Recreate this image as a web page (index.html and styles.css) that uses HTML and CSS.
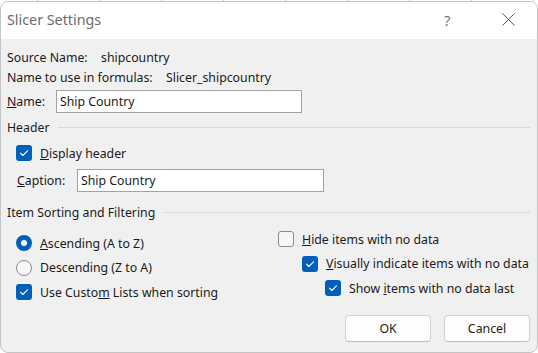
FILE: index.html
```html
<!DOCTYPE html>
<html>
<head>
<meta charset="utf-8">
<link rel="stylesheet" href="styles.css">
</head>
<body>
<div class="sheet"></div>
<div class="window">
  <div class="titlebar">
    <span class="title">Slicer Settings</span>
    <span class="help">?</span>
    <span class="close"><svg width="13" height="13" viewBox="0 0 13 13"><path d="M0.5 0.5 L12.5 12.5 M12.5 0.5 L0.5 12.5" stroke="#5a5a5a" stroke-width="1" fill="none"/></svg></span>
  </div>
  <div class="content">
    <div class="row info"><span class="lbl-src">Source Name:</span><span>shipcountry</span></div>
    <div class="row info"><span class="lbl-formula">Name to use in formulas:</span><span>Slicer_shipcountry</span></div>
    <div class="row field name-field"><label class="lbl-name"><u>N</u>ame:</label><div class="input name-input">Ship Country</div></div>
    <div class="group-title header-title"><span>Header</span><div class="rule"></div></div>
    <div class="row check indent1 display-row"><span class="cb checked"><svg width="16" height="16" viewBox="0 0 16 16"><path d="M4.5 8.2 L6.8 10.5 L11.5 5.8" stroke="#fff" stroke-width="1.1" fill="none" stroke-linecap="round" stroke-linejoin="round"/></svg></span><span><u>D</u>isplay header</span></div>
    <div class="row field caption-field"><label class="lbl-caption"><u>C</u>aption:</label><div class="input caption-input">Ship Country</div></div>
    <div class="group-title sort-title"><span>Item Sorting and Filtering</span><div class="rule"></div></div>
    <div class="columns">
      <div class="col left">
        <div class="row check"><span class="radio checked"></span><span><u>A</u>scending (A to Z)</span></div>
        <div class="row check"><span class="radio"></span><span>Descendin<u>g</u> (Z to A)</span></div>
        <div class="row check"><span class="cb checked"><svg width="16" height="16" viewBox="0 0 16 16"><path d="M4.5 8.2 L6.8 10.5 L11.5 5.8" stroke="#fff" stroke-width="1.1" fill="none" stroke-linecap="round" stroke-linejoin="round"/></svg></span><span>Use Custo<u>m</u> Lists when sorting</span></div>
      </div>
      <div class="col right">
        <div class="row check"><span class="cb"></span><span><u>H</u>ide items with no data</span></div>
        <div class="row check indent-v"><span class="cb checked"><svg width="16" height="16" viewBox="0 0 16 16"><path d="M4.5 8.2 L6.8 10.5 L11.5 5.8" stroke="#fff" stroke-width="1.1" fill="none" stroke-linecap="round" stroke-linejoin="round"/></svg></span><span><u>V</u>isually indicate items with no data</span></div>
        <div class="row check indent-s"><span class="cb checked"><svg width="16" height="16" viewBox="0 0 16 16"><path d="M4.5 8.2 L6.8 10.5 L11.5 5.8" stroke="#fff" stroke-width="1.1" fill="none" stroke-linecap="round" stroke-linejoin="round"/></svg></span><span>Show <u>i</u>tems with no data last</span></div>
      </div>
    </div>
    <div class="buttons">
      <button class="btn">OK</button>
      <button class="btn">Cancel</button>
    </div>
  </div>
</div>
</body>
</html>
```
FILE: styles.css
```css
* { box-sizing: border-box; }
html, body { margin: 0; padding: 0; }
body {
  width: 538px;
  height: 353px;
  overflow: hidden;
  background: #ffffff;
  font-family: "Noto Sans", "Open Sans", sans-serif;
  font-size: 12.3px;
  color: #1a1a1a;
}
.sheet {
  height: 1px;
  background-image: repeating-linear-gradient(to right, transparent 0, transparent 36.5px, #c6c6c6 36.5px, #c6c6c6 37.5px, transparent 37.5px, transparent 62.1px);
  background-position: 0 0;
}
.window {
  height: 352px;
  border: 1px solid #c4c4c4;
  border-radius: 8px 8px 8px 8px;
  overflow: hidden;
  display: flex;
  flex-direction: column;
  background: #f0f0f0;
}
.titlebar {
  height: 37px;
  background: #ffffff;
  display: flex;
  align-items: center;
  padding-left: 6px;
  flex: none;
}
.title {
  font-size: 14.3px;
  color: #6b6b6b;
  flex: 1;
  margin-top: -2px;
}
.help {
  font-size: 15px;
  color: #7a7a7a;
  width: 12px;
  margin-right: 46px;
  margin-top: -2px;
}
.close {
  width: 13px;
  height: 13px;
  margin-right: 22px;
  margin-top: -2px;
  display: flex;
}
.content {
  flex: 1;
  padding: 8px 7px 0 6px;
  display: flex;
  flex-direction: column;
}
.row {
  height: 20px;
  display: flex;
  align-items: center;
  white-space: nowrap;
}
.lbl-src { width: 94px; }
.lbl-formula { width: 159px; }
.field { height: 23px; }
.name-field { margin-top: 3px; }
.lbl-name { width: 49px; }
.input {
  height: 23px;
  border: 1px solid #a2a2a2;
  background: #ffffff;
  padding-left: 3px;
  display: flex;
  align-items: center;
}
.name-input { width: 246px; }
.group-title {
  height: 20px;
  display: flex;
  align-items: center;
}
.group-title .rule {
  flex: 1;
  height: 1px;
  background: #d9d9d9;
  margin-left: 8px;
  margin-top: 0;
}
.header-title { margin-top: 4px; }
.indent1 { padding-left: 9px; }
.display-row { margin-top: 6px; }
.caption-field { margin-top: 6px; padding-left: 10px; }
.lbl-caption { width: 60px; }
.caption-input { width: 247px; }
.sort-title { margin-top: 10px; }
.cb {
  width: 16px;
  height: 16px;
  border-radius: 3px;
  border: 1px solid #8a8a8a;
  background: #f7f7f7;
  margin-right: 8px;
  flex: none;
  display: flex;
}
.cb.checked {
  border: none;
  background: #005fb8;
}
.radio {
  width: 16px;
  height: 16px;
  border-radius: 50%;
  border: 1px solid #8a8a8a;
  background: #f6f6f6;
  margin-right: 8px;
  flex: none;
}
.radio.checked {
  border: 5px solid #005fb8;
  background: #ffffff;
}
.columns {
  display: grid;
  grid-template-columns: 271px 1fr;
}
.col {
  display: flex;
  flex-direction: column;
  gap: 4.5px;
}
.left { padding-left: 9px; margin-top: 11px; }
.right { margin-top: 7px; }
.indent-v { padding-left: 24px; }
.indent-s { padding-left: 47px; }
.buttons {
  display: flex;
  justify-content: flex-end;
  gap: 13px;
  margin-top: 13px;
}
.btn {
  width: 86px;
  height: 27px;
  border: 1px solid #d0d0d0;
  border-bottom-color: #c0c0c0;
  border-radius: 4px;
  background: #fdfdfd;
  font-family: inherit;
  font-size: 12.3px;
  color: #1a1a1a;
  padding: 0;
}
```
